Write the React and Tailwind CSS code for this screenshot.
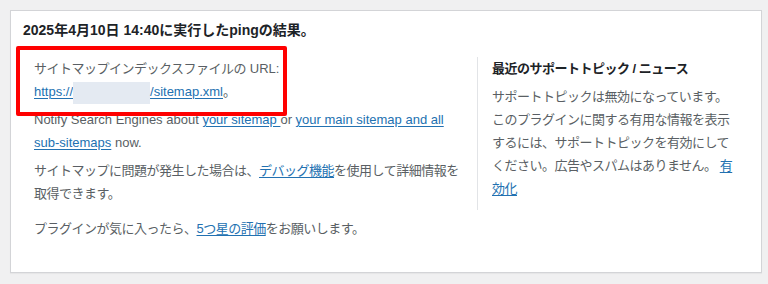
const font = { fontFamily: '"Liberation Sans", "Noto Sans CJK JP", sans-serif' };

const A = ({ children }) => (
  <a href="#" className="text-[#2271b1] underline underline-offset-2 decoration-1">
    {children}
  </a>
);

export default function App() {
  return (
    <div className="w-[768px] h-[284px] bg-[#f0f0f1] pt-[10px] pl-[10px]" style={font}>
      <div className="relative w-[752px] h-[263px] bg-white border border-[#d3d4d7] shadow-[0_1px_1px_rgba(0,0,0,0.04)]">
        {/* Header */}
        <h2 className="px-[12px] pt-[9px] text-[14px] leading-[20px] font-bold text-[#1d2327]">
          2025年4月10日 14:40に実行したpingの結果。
        </h2>

        <div className="flex items-start pl-[23px] pt-[17px] text-[13px] leading-[23px] text-[#5a5f64]">
          {/* Main column */}
          <div className="w-[443px] pr-[10px]">
            <p>
              <span className="tracking-[-0.5px]">サイトマップインデックスファイルの</span> URL:
              <br />
              <a href="#" className="text-[#2271b1] underline underline-offset-2 decoration-1">
                https://
                <span className="inline-block w-[77px] h-[22px] align-middle bg-[#e4eaf2]" />
                /sitemap.xml
              </a>
              。
            </p>
            <p className="mt-[4px]">
              Notify Search Engines about <A>your sitemap </A> or <A>your main sitemap and all sub-sitemaps</A> now.
            </p>
            <p className="mt-[5px] tracking-[-0.5px]">
              サイトマップに問題が発生した場合は、<A>デバッグ機能</A>を使用して詳細情報を取得できます。
            </p>
            <p className="mt-[12px] tracking-[-0.5px]">
              プラグインが気に入ったら、<A>5つ星の評価</A>をお願いします。
            </p>
          </div>

          {/* Sidebar */}
          <div className="border-l border-[#e2e4e7] pl-[14px] pb-[10px]">
            <h3 className="font-bold text-[#1d2327] tracking-[-0.5px]">最近のサポートトピック / ニュース</h3>
            <p className="mt-[5px] w-[245px] tracking-[-0.5px]">
              サポートトピックは無効になっています。このプラグインに関する有用な情報を表示するには、サポートトピックを有効にしてください。広告やスパムはありません。 <A>有効化</A>
            </p>
          </div>
        </div>

        {/* Annotation box */}
        <div className="absolute left-[5px] top-[35px] w-[271px] h-[70px] border-4 border-[#ff0000] rounded-[2px]" />
      </div>
    </div>
  );
}
